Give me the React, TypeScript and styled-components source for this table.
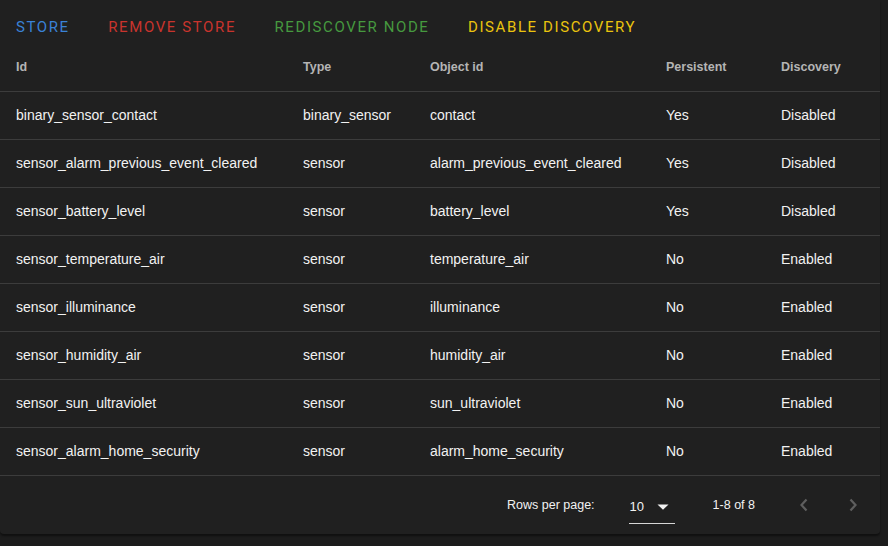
import React from "react";
import styled, { createGlobalStyle } from "styled-components";

const Global = createGlobalStyle`
  html, body { margin: 0; padding: 0; background: #1c1c1c; }
  body { width: 888px; height: 546px; overflow: hidden; }
`;

const Paper = styled.div`
  width: 880px;
  height: 534px;
  background: #202020;
  border-radius: 0 0 4px 4px;
  box-shadow: 0 2px 2px rgba(0, 0, 0, 0.45);
  display: flex;
  flex-direction: column;
`;

const Toolbar = styled.div`
  display: flex;
  align-items: center;
  height: 44px;
  padding: 10px 0 0 8px;
  gap: 22.5px;
  box-sizing: border-box;
`;

const ActionButton = styled.button<{ $color: string }>`
  background: none;
  border: none;
  padding: 6px 8px;
  font-family: Roboto, "Liberation Sans", sans-serif;
  font-size: 15px;
  font-weight: 400;
  letter-spacing: 1.6px;
  text-transform: uppercase;
  color: ${(p) => p.$color};
  line-height: 20px;
  cursor: pointer;
`;

const Table = styled.table`
  width: 880px;
  border-collapse: collapse;
  table-layout: fixed;
  font-family: "Liberation Sans", Arial, sans-serif;
`;

const HeadCell = styled.th`
  height: 47px;
  padding: 0 16px;
  box-sizing: border-box;
  text-align: left;
  font-size: 12.5px;
  font-weight: 700;
  color: #b4b4b4;
  border-bottom: 1px solid #3c3c3c;
  vertical-align: middle;
`;

const Cell = styled.td`
  height: 48px;
  padding: 0 16px;
  box-sizing: border-box;
  font-size: 14px;
  color: #f2f2f2;
  border-bottom: 1px solid #3c3c3c;
  white-space: nowrap;
  vertical-align: middle;
`;

const Footer = styled.div`
  flex: 1;
  display: flex;
  align-items: center;
  justify-content: flex-end;
  padding-right: 7px;
  font-family: "Liberation Sans", Arial, sans-serif;
  font-size: 12.5px;
  color: #f2f2f2;
`;

const RowsLabel = styled.span`
  margin-right: 34px;
`;

const Select = styled.div`
  display: flex;
  align-items: center;
  width: 46px;
  height: 30px;
  box-sizing: border-box;
  padding-left: 1px;
  margin-top: 8px;
  padding-bottom: 3px;
  border-bottom: 1px solid #d6d6d6;
  margin-right: 38px;
  font-size: 13px;
  gap: 13px;
`;

const DisplayedRows = styled.span`
  margin-right: 20px;
`;

const IconButton = styled.button`
  width: 40px;
  height: 40px;
  display: flex;
  align-items: center;
  justify-content: center;
  background: none;
  border: none;
  padding: 0;
  margin-left: 9px;
`;

const columns = [
  { label: "Id", width: 287 },
  { label: "Type", width: 127 },
  { label: "Object id", width: 236 },
  { label: "Persistent", width: 115 },
  { label: "Discovery", width: 115 },
];

const rows: [string, string, string, string, string][] = [
  ["binary_sensor_contact", "binary_sensor", "contact", "Yes", "Disabled"],
  ["sensor_alarm_previous_event_cleared", "sensor", "alarm_previous_event_cleared", "Yes", "Disabled"],
  ["sensor_battery_level", "sensor", "battery_level", "Yes", "Disabled"],
  ["sensor_temperature_air", "sensor", "temperature_air", "No", "Enabled"],
  ["sensor_illuminance", "sensor", "illuminance", "No", "Enabled"],
  ["sensor_humidity_air", "sensor", "humidity_air", "No", "Enabled"],
  ["sensor_sun_ultraviolet", "sensor", "sun_ultraviolet", "No", "Enabled"],
  ["sensor_alarm_home_security", "sensor", "alarm_home_security", "No", "Enabled"],
];

const actions = [
  { label: "Store", color: "#3a82d6" },
  { label: "Remove store", color: "#c9342d" },
  { label: "Rediscover node", color: "#46993f" },
  { label: "Disable discovery", color: "#ebc40e" },
];

export default function App() {
  return (
    <>
      <Global />
      <Paper>
        <Toolbar>
          {actions.map((a) => (
            <ActionButton key={a.label} $color={a.color}>
              {a.label}
            </ActionButton>
          ))}
        </Toolbar>
        <Table>
          <colgroup>
            {columns.map((c) => (
              <col key={c.label} style={{ width: c.width }} />
            ))}
          </colgroup>
          <thead>
            <tr>
              {columns.map((c) => (
                <HeadCell key={c.label}>{c.label}</HeadCell>
              ))}
            </tr>
          </thead>
          <tbody>
            {rows.map((r) => (
              <tr key={r[0]}>
                {r.map((v, i) => (
                  <Cell key={i}>{v}</Cell>
                ))}
              </tr>
            ))}
          </tbody>
        </Table>
        <Footer>
          <RowsLabel>Rows per page:</RowsLabel>
          <Select>
            <span>10</span>
            <svg width="12" height="6" viewBox="0 0 12 6">
              <path d="M0.5 0.5 L11.5 0.5 L6 5.8 Z" fill="#f2f2f2" />
            </svg>
          </Select>
          <DisplayedRows>1-8 of 8</DisplayedRows>
          <IconButton aria-label="previous">
            <svg width="10" height="14" viewBox="0 0 10 14">
              <path d="M7.5 1.5 L2.5 7 L7.5 12.5" fill="none" stroke="#5e5e5e" strokeWidth="2.2" />
            </svg>
          </IconButton>
          <IconButton aria-label="next">
            <svg width="10" height="14" viewBox="0 0 10 14">
              <path d="M2.5 1.5 L7.5 7 L2.5 12.5" fill="none" stroke="#5e5e5e" strokeWidth="2.2" />
            </svg>
          </IconButton>
        </Footer>
      </Paper>
    </>
  );
}
